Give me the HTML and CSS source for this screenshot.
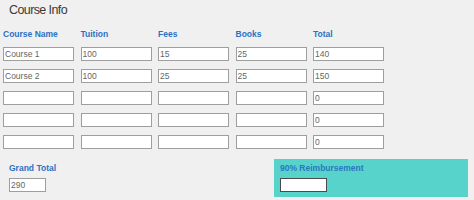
FILE: index.html
```html
<!DOCTYPE html>
<html>
	<head>
		<meta charset="UTF-8">
		<title>Course Info</title>
		<link rel="stylesheet" href="styles.css">
	</head>
	<body>
		<div class="title">Course Info</div>
		<div class="grid">
			<div class="head">Course Name</div>
			<div class="head">Tuition</div>
			<div class="head">Fees</div>
			<div class="head">Books</div>
			<div class="head">Total</div>

			<input type="text" class="cell" value="Course 1" />
			<input type="text" class="cell" value="100" />
			<input type="text" class="cell" value="15" />
			<input type="text" class="cell" value="25" />
			<input type="text" class="cell" value="140" />

			<input type="text" class="cell" value="Course 2" />
			<input type="text" class="cell" value="100" />
			<input type="text" class="cell" value="25" />
			<input type="text" class="cell" value="25" />
			<input type="text" class="cell" value="150" />

			<input type="text" class="cell" />
			<input type="text" class="cell" />
			<input type="text" class="cell" />
			<input type="text" class="cell" />
			<input type="text" class="cell" value="0" />

			<input type="text" class="cell" />
			<input type="text" class="cell" />
			<input type="text" class="cell" />
			<input type="text" class="cell" />
			<input type="text" class="cell" value="0" />

			<input type="text" class="cell" />
			<input type="text" class="cell" />
			<input type="text" class="cell" />
			<input type="text" class="cell" />
			<input type="text" class="cell" value="0" />
		</div>
		<div class="bottom">
			<div class="grand">
				<div class="head">Grand Total</div>
				<input type="text" class="cell small" value="290" />
			</div>
			<div class="reimb">
				<div class="head">90% Reimbursement</div>
				<input type="text" class="cell dark" />
			</div>
		</div>
	</body>
</html>
```

FILE: styles.css
```css
*{
	margin: 0;
	padding: 0;
	box-sizing: border-box;
}
body{
	background-color: #f0f0f0;
	font-family: "Liberation Sans", Arial, sans-serif;
	width: 474px;
	height: 200px;
	overflow: hidden;
}
.title{
	margin-top: 3px;
	padding-left: 9px;
	font-size: 12.5px;
	line-height: 14px;
	letter-spacing: -0.6px;
	color: #3a3a3a;
}
.grid{
	display: grid;
	grid-template-columns: repeat(5, 71px);
	grid-template-rows: 10px repeat(5, 14px);
	column-gap: 6.5px;
	row-gap: 8px;
	margin-top: 12px;
	padding-left: 3px;
}
.head{
	font-size: 8.5px;
	line-height: 10px;
	font-weight: bold;
	color: #2c72c2;
}
.cell{
	display: block;
	width: 71px;
	height: 14px;
	border: 1px solid #9e9e9e;
	background-color: #fff;
	padding: 0 1px;
	font-family: "Liberation Sans", Arial, sans-serif;
	font-size: 8.5px;
	color: #666;
	outline: none;
}
.bottom{
	display: flex;
	justify-content: space-between;
	margin-top: 10px;
}
.grand{
	padding: 4px 0 0 9px;
}
.grand .cell,
.reimb .cell{
	margin-top: 5px;
}
.small{
	width: 37px;
}
.reimb{
	width: 194px;
	height: 38px;
	margin-right: 6px;
	padding: 4px 6px 0;
	background-color: #58d3cb;
}
.reimb .head{
	color: #2a78c0;
}
.dark{
	width: 47px;
	border-color: #4a4a4a;
}
```
